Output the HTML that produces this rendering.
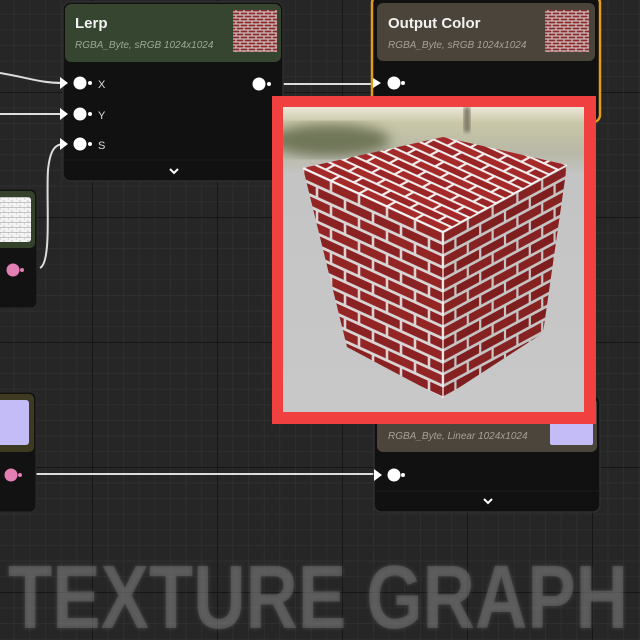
<!DOCTYPE html>
<html><head><meta charset="utf-8"><style>
html,body{margin:0;padding:0;width:640px;height:640px;overflow:hidden;background:#262626}
svg{display:block}
</style></head><body>
<svg width="640" height="640" viewBox="0 0 640 640" xmlns="http://www.w3.org/2000/svg">
<defs>
<pattern id="minor" width="15.625" height="15.625" patternUnits="userSpaceOnUse" x="92" y="92">
<path d="M0 0H15.625M0 0V15.625" stroke="#333" stroke-width="1.2" fill="none"/>
</pattern>
<pattern id="major" width="125" height="125" patternUnits="userSpaceOnUse" x="92" y="92">
<path d="M0 0H125M0 0V125" stroke="#161616" stroke-width="2" fill="none"/>
</pattern>
<pattern id="brick" width="20" height="14.28" patternUnits="userSpaceOnUse">
<rect width="20" height="14.28" fill="#f2eeee"/>
<rect x="0.9" y="0.9" width="18.2" height="5.3" fill="#a52a2a"/>
<rect x="-9.1" y="8.04" width="18.2" height="5.3" fill="#9a2526"/>
<rect x="10.9" y="8.04" width="18.2" height="5.3" fill="#9a2526"/>
</pattern>
<pattern id="sbrick" width="8" height="6" patternUnits="userSpaceOnUse">
<rect width="8" height="6" fill="#ddd"/>
<rect x="0.5" y="0.5" width="7" height="2" fill="#8a2a2a"/>
<rect x="-3.5" y="3.5" width="7" height="2" fill="#8a2a2a"/>
<rect x="4.5" y="3.5" width="7" height="2" fill="#8a2a2a"/>
</pattern>
<pattern id="tbrick" width="8" height="5" patternUnits="userSpaceOnUse">
<rect width="8" height="5" fill="#f4f4f4"/>
<path d="M0 2.5H8M4 0V2.5M0 2.5V5" stroke="#999" stroke-width="0.5"/>
</pattern>
<linearGradient id="bg" x1="0" y1="0" x2="0" y2="1">
<stop offset="0" stop-color="#ece8da"/>
<stop offset="0.05" stop-color="#c9c8a8"/>
<stop offset="0.15" stop-color="#b8b8a6"/>
<stop offset="0.22" stop-color="#c4c4c4"/>
<stop offset="1" stop-color="#c8c8c8"/>
</linearGradient>
<filter id="blur"><feGaussianBlur stdDeviation="6"/></filter>
<filter id="glow"><feGaussianBlur stdDeviation="2"/></filter>
<clipPath id="pv"><rect x="283" y="107" width="301" height="305"/></clipPath>
<clipPath id="cT"><polygon points="303,168 443,137 567,165 443,232"/></clipPath>
<clipPath id="cL"><polygon points="303,168 443,232 443,398 347,347"/></clipPath>
<clipPath id="cR"><polygon points="443,232 567,165 543,333 443,398"/></clipPath>
</defs>
<rect width="640" height="640" fill="#262626"/>
<rect width="640" height="640" fill="url(#minor)"/>
<rect width="640" height="640" fill="url(#major)"/>

<g stroke="#ddd" stroke-width="2" fill="none">
<path d="M0 73 C30 78 40 83 64 83"/>
<path d="M0 114 H64"/>
<path d="M40 268 C52 262 46 200 48 170 C50 150 55 144 64 144"/>
<path d="M272 84 H372"/>
<path d="M30 474 H374"/>
</g>

<rect x="-10" y="189" width="47" height="119" rx="6" fill="#121212" stroke="#2c2c2c"/>
<rect x="-10" y="191" width="45" height="57" rx="5" fill="#34422b"/>
<rect x="-2" y="197" width="33" height="45" rx="3" fill="url(#tbrick)"/>
<circle cx="13" cy="270" r="6.5" fill="#e47fb4"/><circle cx="22" cy="270" r="2" fill="#e47fb4"/>
<rect x="-10" y="392" width="46" height="120" rx="6" fill="#121212" stroke="#2c2c2c"/>
<rect x="-10" y="394" width="44" height="58" rx="5" fill="#3e3a22"/>
<rect x="-2" y="400" width="31" height="45" rx="3" fill="#c4bcf6"/>
<circle cx="11" cy="475" r="6.5" fill="#e47fb4"/><circle cx="20" cy="475" r="2" fill="#e47fb4"/>

<rect x="63" y="2" width="220" height="179" rx="7" fill="#111" stroke="#2e2e2e" stroke-width="1.5"/>
<rect x="65" y="4" width="216" height="58" rx="6" fill="#36452f"/>
<text x="75" y="28" font-family="Liberation Sans, sans-serif" font-weight="bold" font-size="15" fill="#f2f2f2">Lerp</text>
<text x="75" y="48" font-family="Liberation Sans, sans-serif" font-style="italic" font-size="10" fill="#9aa896">RGBA_Byte, sRGB   1024x1024</text>
<rect x="233" y="10" width="44" height="42" fill="url(#sbrick)"/>
<g fill="#fff">
<path d="M60 77 L68 83 L60 89Z"/><circle cx="80" cy="83" r="6.5"/><circle cx="90" cy="83" r="2"/>
<path d="M60 108 L68 114 L60 120Z"/><circle cx="80" cy="114" r="6.5"/><circle cx="90" cy="114" r="2"/>
<path d="M60 138 L68 144 L60 150Z"/><circle cx="80" cy="144" r="6.5"/><circle cx="90" cy="144" r="2"/>
<circle cx="259" cy="84" r="6.5"/><circle cx="269" cy="84" r="2"/>
</g>
<g font-family="Liberation Sans, sans-serif" font-size="11" fill="#ddd">
<text x="98" y="88">X</text><text x="98" y="119">Y</text><text x="98" y="149">S</text>
</g>
<path d="M64 160 H282" stroke="#1c1c1c"/>
<path d="M170 169 L174 173 L178 169" stroke="#fff" stroke-width="2" fill="none"/>

<rect x="372" y="-4" width="228" height="126" rx="7" fill="#111" stroke="#e49a1c" stroke-width="2.5"/>
<rect x="377" y="3" width="218" height="58" rx="6" fill="#4b443a"/>
<text x="388" y="28" font-family="Liberation Sans, sans-serif" font-weight="bold" font-size="15" fill="#f2f2f2">Output Color</text>
<text x="388" y="48" font-family="Liberation Sans, sans-serif" font-style="italic" font-size="10" fill="#a8a095">RGBA_Byte, sRGB   1024x1024</text>
<rect x="545" y="10" width="44" height="42" fill="url(#sbrick)"/>
<g fill="#fff"><path d="M373 78 L381 83 L373 88Z"/><circle cx="394" cy="83" r="6.5"/><circle cx="403" cy="83" r="2"/></g>

<rect x="374" y="395" width="226" height="117" rx="7" fill="#111" stroke="#2e2e2e" stroke-width="1.5"/>
<rect x="377" y="398" width="220" height="54" rx="6" fill="#4b453c"/>
<text x="388" y="439" font-family="Liberation Sans, sans-serif" font-style="italic" font-size="10" fill="#a8a095">RGBA_Byte, Linear   1024x1024</text>
<rect x="550" y="420" width="43" height="25" rx="2" fill="#c4bcf6"/>
<g fill="#fff"><path d="M374 469 L382 475 L374 481Z"/><circle cx="394" cy="475" r="6.5"/><circle cx="403" cy="475" r="2"/></g>
<path d="M375 491 H599" stroke="#1c1c1c"/>
<path d="M484 499 L488 503 L492 499" stroke="#fff" stroke-width="2" fill="none"/>

<rect x="272" y="96" width="324" height="328" fill="#f04040"/>
<g clip-path="url(#pv)">
<rect x="283" y="107" width="301" height="305" fill="url(#bg)"/>
<ellipse cx="330" cy="140" rx="60" ry="16" fill="#505838" opacity="0.7" filter="url(#blur)"/>
<rect x="464" y="107" width="6" height="25" fill="#777060" filter="url(#glow)"/>
<g clip-path="url(#cL)"><g transform="matrix(1.4,0.64,0,1.66,303,168)">
<rect width="100" height="100" fill="url(#brick)"/><rect width="100" height="100" fill="#000" opacity="0.1"/>
</g></g>
<g clip-path="url(#cR)"><g transform="matrix(1.24,-0.67,0,1.66,443,232)">
<rect width="100" height="100" fill="url(#brick)"/><rect width="100" height="100" fill="#000" opacity="0.18"/>
</g></g>
<g clip-path="url(#cT)"><g transform="matrix(-1.4,-0.64,1.24,-0.67,443,232)">
<rect width="100" height="100" fill="url(#brick)"/>
</g></g>
<path d="M303 168 L443 232 L567 165 M443 232 V398" stroke="#fff" stroke-width="1.5" fill="none" opacity="0.8"/>
</g>

<text x="8" y="628" textLength="620" lengthAdjust="spacingAndGlyphs" font-family="Liberation Sans, sans-serif" font-weight="bold" font-size="90" fill="#8a8a8a" opacity="0.35" filter="url(#glow)">TEXTURE GRAPH</text>
<text x="8" y="628" textLength="620" lengthAdjust="spacingAndGlyphs" font-family="Liberation Sans, sans-serif" font-weight="bold" font-size="90" fill="#7a7a7a" opacity="0.4">TEXTURE GRAPH</text>
</svg>
</body></html>
